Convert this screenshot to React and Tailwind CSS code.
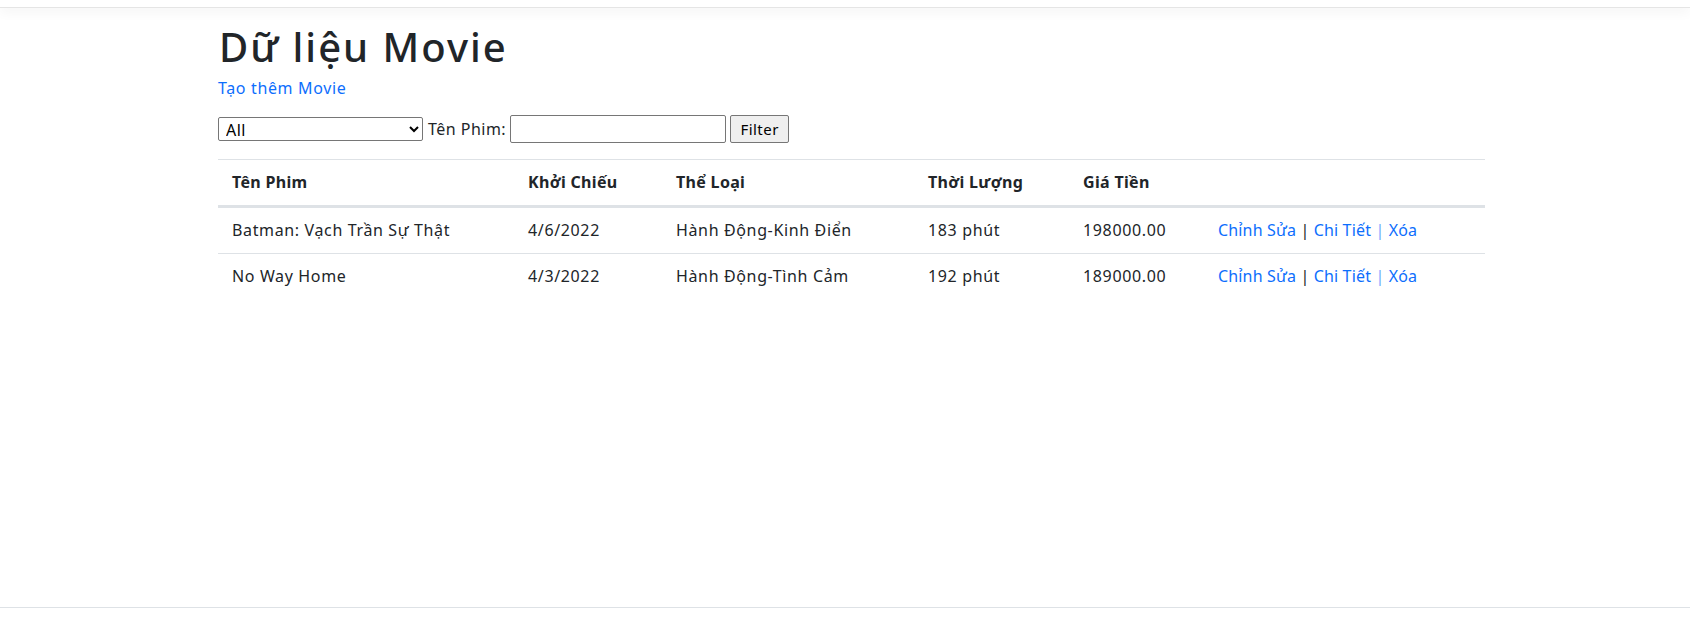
import React from 'react';

const movies = [
  { id: 1, name: 'Batman: Vạch Trần Sự Thật', date: '4/6/2022', genre: 'Hành Động-Kinh Điển', length: '183 phút', price: '198000.00' },
  { id: 2, name: 'No Way Home', date: '4/3/2022', genre: 'Hành Động-Tình Cảm', length: '192 phút', price: '189000.00' },
];

const font = { fontFamily: '"Noto Sans", "Open Sans", sans-serif' };

export default function App() {
  return (
    <div className="min-h-screen flex flex-col bg-white text-[#212529]" style={font}>
      {/* navbar edge */}
      <div className="h-[8px] border-b border-[#e5e5e5] shadow-[0_4px_12px_rgba(0,0,0,0.05)]" />

      <main className="ml-[218px] w-[1267px]">
        <h1 className="mt-[15px] mb-[5px] ml-[1px] text-[40px] leading-[48px] font-medium tracking-[0.05em]">Dữ liệu Movie</h1>
        <p className="text-[16px] leading-[24px] tracking-[0.04em]">
          <a href="#" className="text-[#0d6efd]">Tạo thêm Movie</a>
        </p>

        <form className="mt-[15px] flex items-center h-[28px] text-[16px] tracking-[0.03em]" onSubmit={e => e.preventDefault()}>
          <select className="w-[205px] h-[24px] pl-[3px] border border-[#767676] rounded-[2px] bg-white text-[16px] text-black">
            <option>All</option>
          </select>
          <label className="ml-[5px] mr-[4px] text-[#212529]">Tên Phim:</label>
          <input type="text" className="w-[216px] h-[28px] border border-[#767676] rounded-[2px] px-1" />
          <button className="ml-[4px] w-[59px] h-[28px] border border-[#767676] rounded-[2px] bg-[#efefef] text-[15px] font-normal text-black">Filter</button>
        </form>

        <table className="mt-[16px] w-[1267px] table-fixed border-collapse text-[16px] leading-[24px] tracking-[0.04em]">
          <colgroup>
            <col className="w-[296px]" />
            <col className="w-[148px]" />
            <col className="w-[252px]" />
            <col className="w-[155px]" />
            <col className="w-[135px]" />
            <col className="w-[281px]" />
          </colgroup>
          <thead>
            <tr className="border-t border-[#dee2e6] border-b-[3px] border-b-[#dee2e6]">
              {['Tên Phim', 'Khởi Chiếu', 'Thể Loại', 'Thời Lượng', 'Giá Tiền', ''].map((h, i) => (
                <th key={i} className="text-left font-bold pl-[14px] pt-[10px] pb-[11px] tracking-[0.02em]">{h}</th>
              ))}
            </tr>
          </thead>
          <tbody>
            {movies.map((m, i) => (
              <tr key={m.id} className={i < movies.length - 1 ? 'border-b border-[#dee2e6]' : ''}>
                <td className="pl-[14px] pt-[10px] pb-[11px]">{m.name}</td>
                <td className="pl-[14px] pt-[10px] pb-[11px]">{m.date}</td>
                <td className="pl-[14px] pt-[10px] pb-[11px]">{m.genre}</td>
                <td className="pl-[14px] pt-[10px] pb-[11px]">{m.length}</td>
                <td className="pl-[14px] pt-[10px] pb-[11px]">{m.price}</td>
                <td className="pl-[14px] pt-[10px] pb-[11px] tracking-[0.01em]">
                  <a href="#" className="text-[#0d6efd]">Chỉnh Sửa</a> | <a href="#" className="text-[#0d6efd]">Chi Tiết</a>{' '}
                  <span className="text-[#6ea8fe]">|</span> <a href="#" className="text-[#0d6efd]">Xóa</a>
                </td>
              </tr>
            ))}
          </tbody>
        </table>
      </main>

      <footer className="mt-auto h-[11px] border-t border-[#dee2e6]" />
    </div>
  );
}
